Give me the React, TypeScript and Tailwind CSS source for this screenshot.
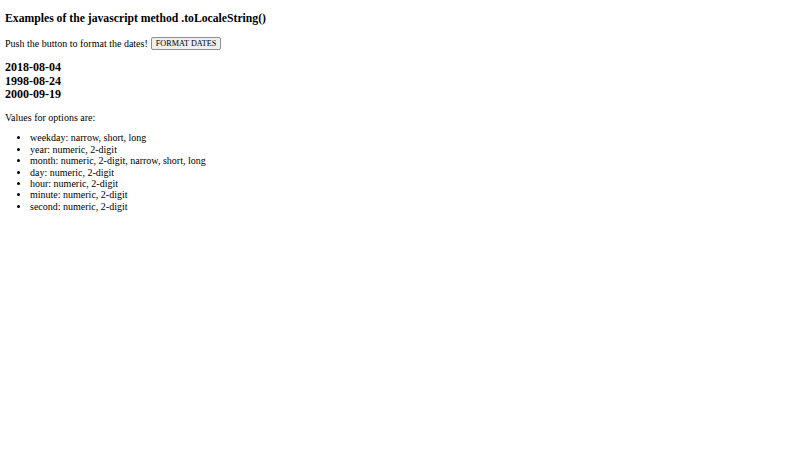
export default function App() {
  const dates = ["2018-08-04", "1998-08-24", "2000-09-19"]
  const options = [
    "weekday: narrow, short, long",
    "year: numeric, 2-digit",
    "month: numeric, 2-digit, narrow, short, long",
    "day: numeric, 2-digit",
    "hour: numeric, 2-digit",
    "minute: numeric, 2-digit",
    "second: numeric, 2-digit",
  ]

  return (
    <div className="min-h-screen bg-white p-[5px] text-[10px] text-black font-['Liberation_Serif',serif]">
      <h3 className="mt-[6.7px] text-[11.7px] font-bold leading-[13.4px]">
        Examples of the javascript method .toLocaleString()
      </h3>

      <p className="mt-[11.7px] flex h-[13px] items-center gap-[3px] leading-[11.5px]">
        <span>Push the button to format the dates!</span>
        <button className="h-[13px] rounded-[2px] border border-[#8f8f8f] bg-[#efefef] px-[4px] text-[8.2px] leading-[11px] font-['Liberation_Serif',serif]">
          FORMAT DATES
        </button>
      </p>

      <h3 className="mt-[11.3px] text-[12px] font-bold leading-[13.7px]">
        {dates.map((d) => (
          <div key={d}>{d}</div>
        ))}
      </h3>

      <p className="mt-[10px] leading-[11.5px]">Values for options are:</p>

      <ul className="mt-[8.8px] list-disc pl-[25px] leading-[11.35px]">
        {options.map((o) => (
          <li key={o}>{o}</li>
        ))}
      </ul>
    </div>
  )
}
